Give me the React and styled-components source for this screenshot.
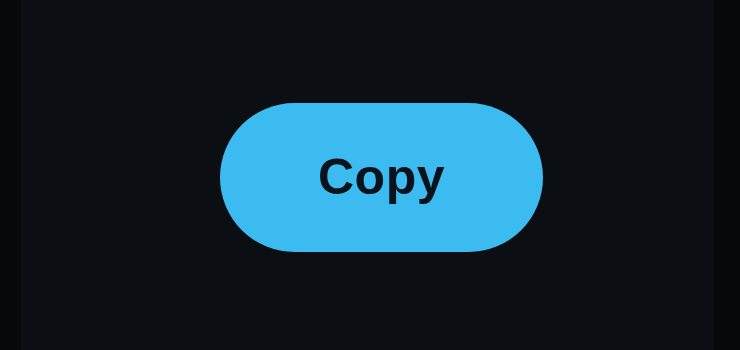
import React from "react";
import styled, { createGlobalStyle } from "styled-components";

const Global = createGlobalStyle`
  html, body { margin: 0; padding: 0; background: #0b0f13; }
  body { font-family: "Liberation Sans", Arial, sans-serif; }
`;

const Frame = styled.div`
  display: flex;
  width: 740px;
  height: 350px;
  background: #0b0f13;
`;

const Edge = styled.div`
  width: ${(p) => p.$w}px;
  flex: none;
  background: #05090c;
`;

const Stage = styled.main`
  flex: 1;
  display: flex;
  align-items: center;
  justify-content: center;
  padding: 5px 0 0 28px;
  background: #0b0f13;
`;

const CopyButton = styled.button`
  width: 323px;
  height: 149px;
  border: none;
  border-radius: 75px;
  background: #3cbbf1;
  color: #0a121b;
  font-family: "Liberation Sans", Arial, sans-serif;
  font-weight: 700;
  font-size: 50px;
  letter-spacing: 0.5px;
  display: flex;
  align-items: center;
  justify-content: center;
  padding: 0 0 2px 0;
  cursor: pointer;
`;

export default function App() {
  return (
    <>
      <Global />
      <Frame>
        <Edge $w={21} />
        <Stage>
          <CopyButton>Copy</CopyButton>
        </Stage>
        <Edge $w={26} />
      </Frame>
    </>
  );
}
